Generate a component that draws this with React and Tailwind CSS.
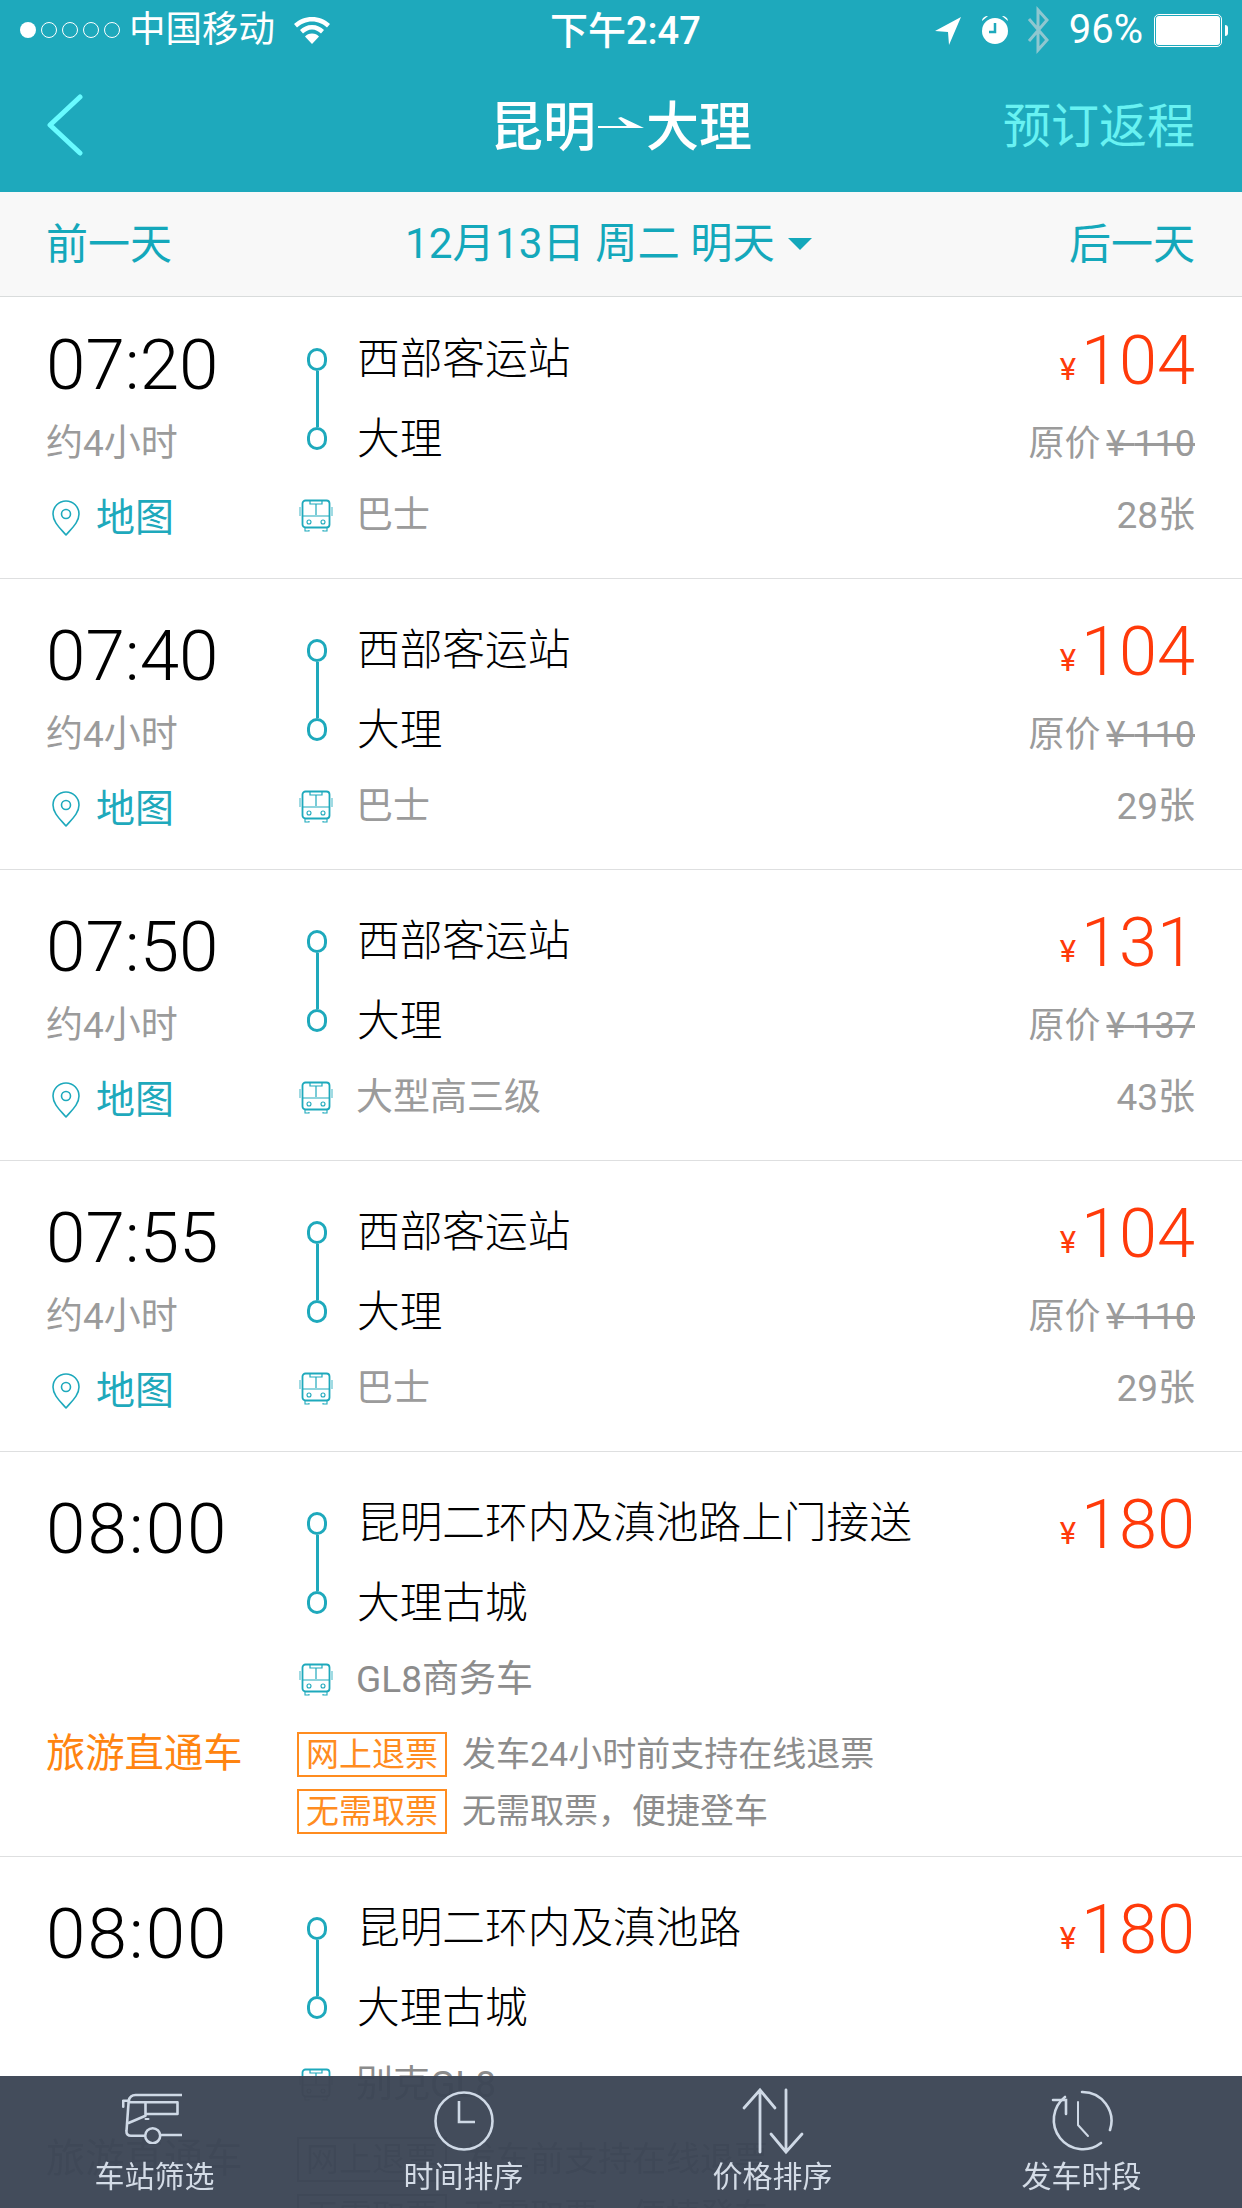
import React from "react";

const CJK = "font-['Roboto','Noto_Sans_CJK_SC',sans-serif]";

const trips = [
  { time: "07:20", from: "西部客运站", to: "大理", bus: "巴士", price: "104", orig: "110", left: "28张", first: true },
  { time: "07:40", from: "西部客运站", to: "大理", bus: "巴士", price: "104", orig: "110", left: "29张" },
  { time: "07:50", from: "西部客运站", to: "大理", bus: "大型高三级", price: "131", orig: "137", left: "43张" },
  { time: "07:55", from: "西部客运站", to: "大理", bus: "巴士", price: "104", orig: "110", left: "29张" },
];

const BusIcon = () => (
  <svg width="34" height="34" viewBox="0 0 34 34" fill="none" stroke="#1ea9bc" strokeWidth="1.4" className="shrink-0">
    <rect x="3.500" y="1.500" width="27" height="27" rx="3" strokeWidth="1.800" />
    <path d="M11 2v3h12V2M17 5v11M4 17h26" strokeWidth="1.200" />
    <circle cx="10" cy="23" r="2" strokeWidth="1.100" />
    <circle cx="24" cy="23" r="2" strokeWidth="1.100" />
    <path d="M1 8v9M33 8v9" strokeOpacity="0.6" />
    <path d="M6 29v3h4v-1M24 31v1h4v-3" strokeWidth="1.100" />
  </svg>
);

const PinIcon = () => (
  <svg width="30" height="38" viewBox="0 0 30 38" fill="none" stroke="#1ea9bc" strokeWidth="1.6" className="shrink-0">
    <path d="M15 36 C9 29 2 23 2 15 A13 13 0 0 1 28 15 C28 23 21 29 15 36Z" strokeLinejoin="round" />
    <circle cx="15" cy="15" r="4.500" />
  </svg>
);

const RouteLine = () => (
  <div className="w-[20px] h-[102px] ml-[8px] flex flex-col items-center shrink-0">
    <div className="w-[20px] h-[23px] rounded-full border-[3px] border-[#1ea9bc]" />
    <div className="w-[3px] flex-1 bg-[#1ea9bc]" />
    <div className="w-[20px] h-[23px] rounded-full border-[3px] border-[#1ea9bc]" />
  </div>
);

const Stops = ({ from, to }) => (
  <div className="flex items-center gap-[30px] h-[137px]">
    <RouteLine />
    <div className="flex flex-col gap-[22px] text-[42.7px] leading-[58px] text-black font-light">
      <div>{from}</div>
      <div>{to}</div>
    </div>
  </div>
);

const Yuan = ({ value }) => (
  <div className="flex items-baseline text-[#ff3a0a] h-[64px] leading-[64px] -mt-[4px] mb-[4px]">
    <span className="text-[31px] mr-[5px] relative -top-[4px]">¥</span>
    <span className="text-[68.500px] font-light">{value}</span>
  </div>
);

const MidColumn = ({ from, to, bus, color }) => (
  <div className="flex-1 -mt-[3px]">
    <Stops from={from} to={to} />
    <div className={`flex items-center gap-[23px] mt-[24px] h-[50px] text-[37px] ${color}`}>
      <BusIcon />
      <span>{bus}</span>
    </div>
  </div>
);

const TripRow = ({ t }) => (
  <div className={`flex justify-between pl-[46px] pr-[47px] border-b-[1.5px] border-[#dedfe0] bg-white ${t.first ? "h-[282px] pt-[36px]" : "h-[291px] pt-[45px]"}`}>
    <div className="w-[253px] shrink-0">
      <div className="text-[71px] leading-[64px] h-[64px] font-light text-black">{t.time}</div>
      <div className="text-[37px] leading-[50px] mt-[22px] text-[#9b9b9b]">约4小时</div>
      <div className="flex items-center mt-[24px] h-[50px] pl-[5px]">
        <PinIcon />
        <span className="text-[39px] text-[#1ea9bc] ml-[15px]">地图</span>
      </div>
    </div>
    <MidColumn from={t.from} to={t.to} bus={t.bus} color="text-[#9b9b9b]" />
    <div className="flex flex-col items-end">
      <Yuan value={t.price} />
      <div className="text-[36px] leading-[50px] mt-[22px] text-[#9b9b9b]">
        原价<span className="line-through ml-[6px]">¥ {t.orig}</span>
      </div>
      <div className="text-[37px] leading-[50px] mt-[22px] text-[#9b9b9b]">{t.left}</div>
    </div>
  </div>
);

const Tag = ({ label, text }) => (
  <div className="flex items-center h-[45px]">
    <span className="w-[150px] h-[45px] border-2 border-[#ff8c1f] text-[#ff8c1f] text-[33px] leading-[41px] text-center shrink-0">{label}</span>
    <span className="text-[34px] text-[#8c8c8c] ml-[15px] whitespace-nowrap">{text}</span>
  </div>
);

const ExpressRow = ({ from, to, bus, price, tags }) => (
  <div className="h-[405px] pt-[45px] pl-[46px] pr-[47px] border-b-[1.5px] border-[#dedfe0] bg-white">
    <div className="flex justify-between">
      <div className="w-[253px] shrink-0 text-[71px] leading-[64px] h-[64px] font-light tracking-[2px] text-black">08:00</div>
      <MidColumn from={from} to={to} bus={bus} color="text-[#8c8c8c]" />
      <Yuan value={price} />
    </div>
    <div className="flex mt-[27px]">
      <div className="w-[251px] shrink-0 text-[39.300px] leading-[45px] text-[#ff8410]">旅游直通车</div>
      <div className="flex flex-col gap-[12px]">
        {tags.map(([label, text]) => (
          <Tag key={label} label={label} text={text} />
        ))}
      </div>
    </div>
  </div>
);

const tabIcons = {
  station: (
    <svg width="60" height="51" viewBox="0 0 60 51" fill="none" stroke="#cfd9e6" strokeWidth="2.6" strokeLinecap="round" strokeLinejoin="round" className="-ml-[6px] -mt-[5px]">
      <path d="M60 2H13.500C9.500 2 7.500 4 6.700 7.700L4.500 38c-.3 3 1.500 4.700 4.500 4.700h13" />
      <path d="M7 7.700H1.200v6" />
      <path d="M8 9.300h47.500V21H23.500V9.300M23.500 21v1.700L6.500 30" />
      <path d="M23.500 26h3" strokeWidth="2" />
      <circle cx="30.700" cy="42.700" r="7.500" />
      <path d="M38.500 42h21.500" />
    </svg>
  ),
  clock: (
    <svg width="62" height="72" viewBox="0 0 62 72" fill="none" stroke="#cfd9e6" strokeWidth="2.6">
      <circle cx="31" cy="36" r="28.500" />
      <path d="M26 16v21h16" />
    </svg>
  ),
  sort: (
    <svg width="62" height="68" viewBox="0 0 62 68" fill="none" stroke="#cfd9e6" strokeWidth="2.8" strokeLinecap="round">
      <path d="M18 65V3M2 21L18 3l15 18" />
      <path d="M44 3v62M29 47l15 18 16-18" />
    </svg>
  ),
  history: (
    <svg width="62" height="72" viewBox="0 0 62 72" fill="none" stroke="#cfd9e6" strokeWidth="2.6" strokeLinecap="round">
      <path d="M31 7a29 29 0 0 1 28 38" />
      <path d="M50 58A29 29 0 0 1 14 12" />
      <path d="M2 15h13v14" />
      <path d="M27 17v23l10 11" strokeWidth="2" />
    </svg>
  ),
};

const TabItem = ({ icon, label }) => (
  <div className="flex flex-col items-center w-[309px]">
    <div className="h-[72px] flex items-center justify-center">{tabIcons[icon]}</div>
    <span className="text-[30px] leading-[40px] text-[#d3dbe6]">{label}</span>
  </div>
);

export default function App() {
  return (
    <div className={`relative w-[1242px] h-[2208px] overflow-hidden bg-white ${CJK}`}>
      <header className="h-[192px] bg-[#1ea9bc]">
        <div className="h-[60px] flex items-center justify-between pl-[20px] pr-[14px] text-white relative">
          <div className="flex items-center">
            <div className="flex gap-[5px] mr-[9px]">
              <div className="w-[16px] h-[16px] rounded-full bg-white" />
              {[0, 1, 2, 3].map((i) => (
                <div key={i} className="w-[16px] h-[16px] rounded-full border border-white" />
              ))}
            </div>
            <span className="text-[36.500px] leading-[64px]">中国移动</span>
            <svg width="38" height="32" viewBox="0 0 38 32" fill="white" className="ml-[18px]">
              <path d="M19 3C12 3 6 5.500 1 10l3 3.500C8 10 13 7.500 19 7.500S30 10 34 13.500l3-3.500C32 5.500 26 3 19 3z" />
              <path d="M19 11c-5 0-9 2-12 5l3 3.500c2.500-2.300 5.500-4 9-4s6.500 1.700 9 4l3-3.500c-3-3-7-5-12-5z" />
              <path d="M19 19.500c-3 0-5.300 1-7 3L19 30l7-7.500c-1.700-2-4-3-7-3z" />
            </svg>
          </div>
          <div className="absolute left-[550px] top-0 text-[38px] leading-[62px] font-medium">下午2:47</div>
          <div className="flex items-center">
            <svg width="28" height="32" viewBox="0 0 28 32" fill="white">
              <path d="M27 3L1 17l13 1 1 13z" />
            </svg>
            <svg width="30" height="34" viewBox="0 0 30 34" fill="white" className="ml-[18px]">
              <circle cx="15" cy="18" r="13" />
              <path d="M2 8c0-3 3-5 6-5zM28 8c0-3-3-5-6-5z" />
              <path d="M15 10v9H9" fill="none" stroke="#1ea9bc" strokeWidth="2.500" />
            </svg>
            <svg width="24" height="50" viewBox="0 0 24 50" fill="none" stroke="#8fc7d0" strokeWidth="3" className="ml-[16px]">
              <path d="M3 14l18 21-9 10V5l9 10L3 36" />
            </svg>
            <span className="text-[40px] leading-[62px] ml-[19px]">96%</span>
            <div className="w-[68px] h-[33px] rounded-[5px] border border-white p-[1px] ml-[11px]">
              <div className="w-full h-full bg-white rounded-[3px]" />
            </div>
            <div className="w-[3px] h-[11px] bg-white rounded-r-full ml-[3px]" />
          </div>
        </div>
        <div className="h-[132px] flex items-center justify-between pl-[46px] pr-[47px] pb-[2px] relative">
          <svg width="38" height="62" viewBox="0 0 38 62" fill="none" stroke="#68fbff" strokeWidth="5" strokeLinecap="round" strokeLinejoin="round">
            <path d="M34 3L4 31l30 28" />
          </svg>
          <div className="absolute left-0 right-0 top-[24px] flex items-center justify-center text-[53px] leading-[88px] text-white font-medium">
            <span>昆明</span>
            <svg width="46" height="22" viewBox="0 0 46 22" fill="white" className="mx-[2px] -mt-[5px]">
              <path d="M0 11h29L20 3l3-1 23 11H0z" />
            </svg>
            <span>大理</span>
          </div>
          <span className="text-[48px] leading-[68px] mt-[4px] text-[#68f2f2]">预订返程</span>
        </div>
      </header>

      <div className="h-[105px] bg-[#f8f8f8] border-b-[1.5px] border-[#d9dcdc] flex items-center justify-between pl-[46px] pr-[47px] text-[#14a8bb] text-[42px]">
        <span>前一天</span>
        <div className="flex items-center text-[42.300px] mr-[24px]">
          <span>12月13日 周二 明天</span>
          <div className="ml-[13px] w-0 h-0 border-l-[12px] border-r-[12px] border-t-[12px] border-l-transparent border-r-transparent border-t-[#14a8bb]" />
        </div>
        <span>后一天</span>
      </div>

      {trips.map((t) => (
        <TripRow key={t.time} t={t} />
      ))}
      <ExpressRow
        from="昆明二环内及滇池路上门接送"
        to="大理古城"
        bus="GL8商务车"
        price="180"
        tags={[["网上退票", "发车24小时前支持在线退票"], ["无需取票", "无需取票，便捷登车"]]}
      />
      <ExpressRow
        from="昆明二环内及滇池路"
        to="大理古城"
        bus="别克GL8"
        price="180"
        tags={[["网上退票", "发车前支持在线退票"], ["无需取票", "无需取票，便捷登车"]]}
      />

      <nav className="absolute left-0 right-0 bottom-0 h-[132px] bg-[#3b4554]/[0.96] backdrop-grayscale flex pt-[9px]">
        <TabItem icon="station" label="车站筛选" />
        <TabItem icon="clock" label="时间排序" />
        <TabItem icon="sort" label="价格排序" />
        <TabItem icon="history" label="发车时段" />
      </nav>
    </div>
  );
}
